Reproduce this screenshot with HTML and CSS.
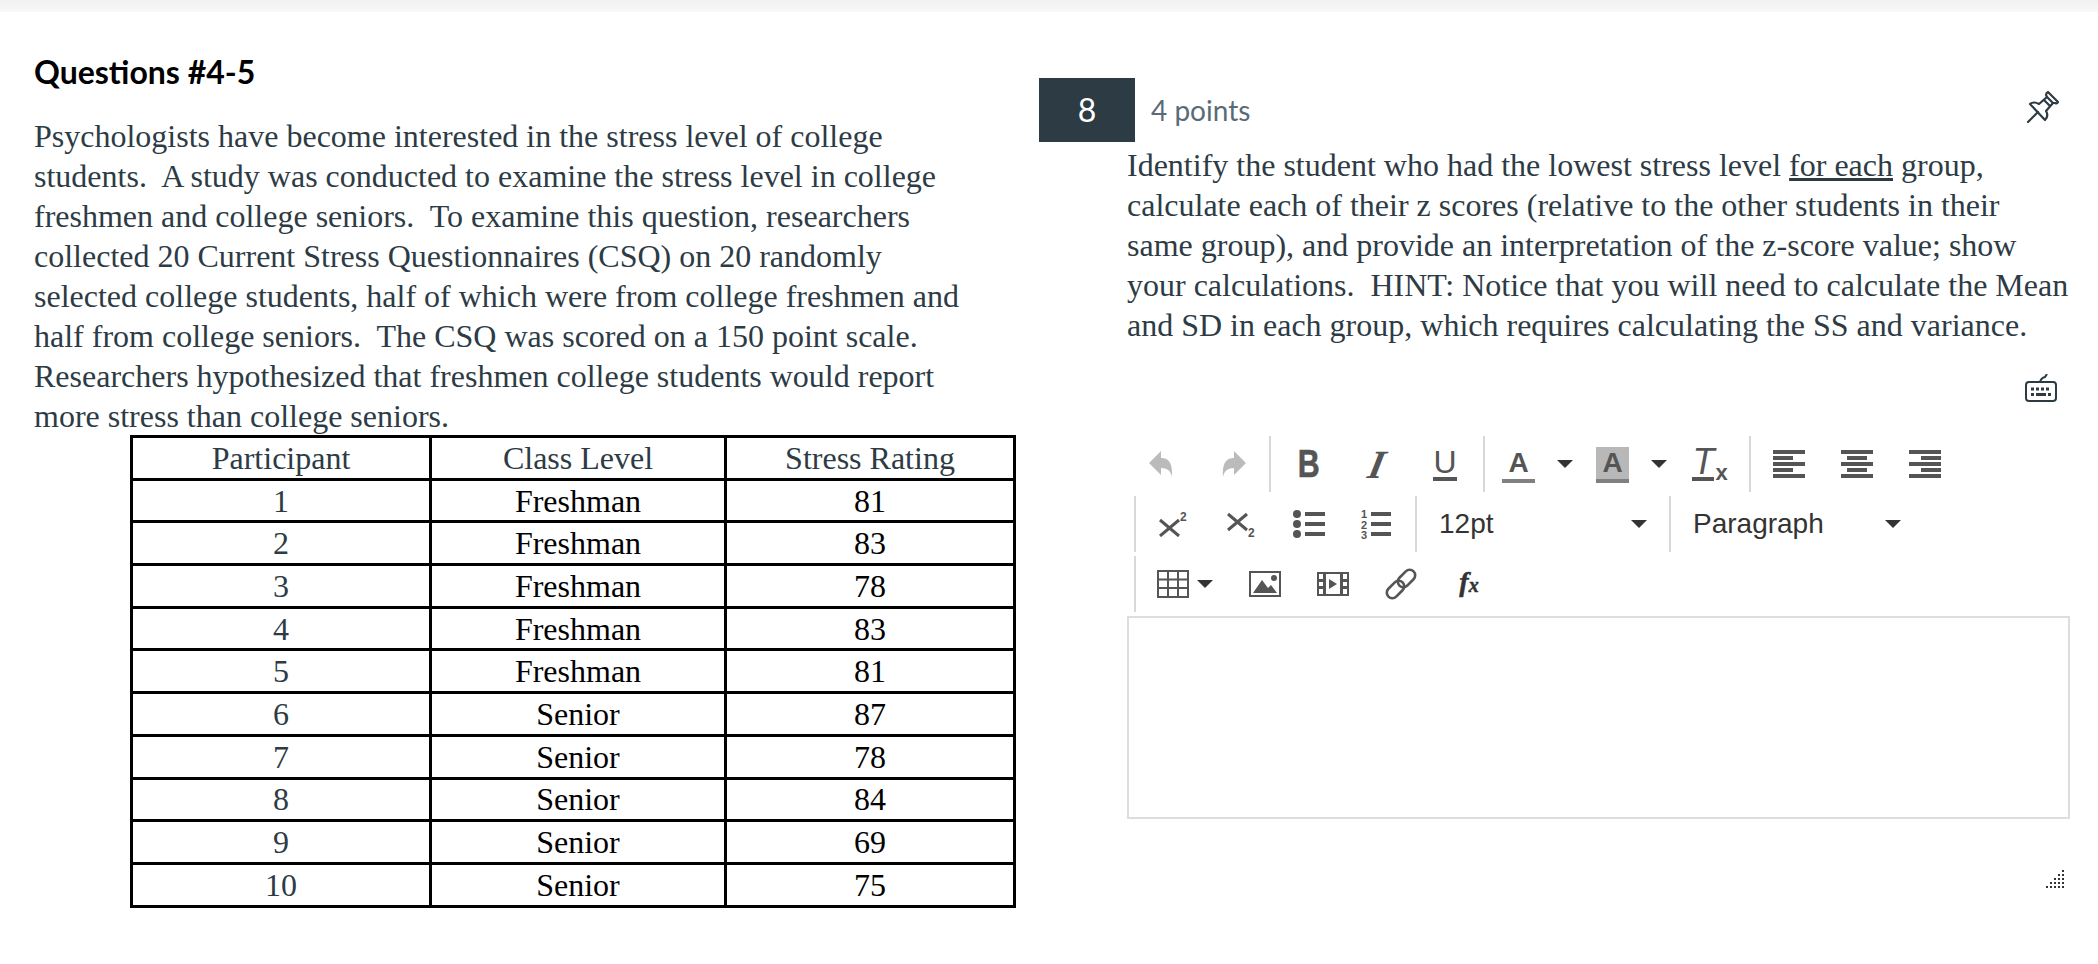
FILE: index.html
```html
<!DOCTYPE html>
<html lang="en">
<head>
  <meta charset="UTF-8" />
  <title>Quiz Question 8</title>
  <link rel="stylesheet" href="styles.css">
</head>
<body>
  <div class="topbar"></div>
  <div class="page">
    <!-- Shared passage -->
    <section class="passage">
      <h2>Questions #4-5</h2>
      <p>Psychologists have become interested in the stress level of college students.&nbsp; A study was conducted to examine the stress level in college freshmen and college seniors.&nbsp; To examine this question, researchers collected 20 Current Stress Questionnaires (CSQ) on 20 randomly selected college students, half of which were from college freshmen and half from college seniors.&nbsp; The CSQ was scored on a 150 point scale.&nbsp; Researchers hypothesized that freshmen college students would report more stress than college seniors.</p>
      <table class="data">
        <tr class="head thin"><td>Participant</td><td>Class Level</td><td>Stress Rating</td></tr>
        <tr><td>1</td><td>Freshman</td><td>81</td></tr>
        <tr><td>2</td><td>Freshman</td><td>83</td></tr>
        <tr><td>3</td><td>Freshman</td><td>78</td></tr>
        <tr><td>4</td><td>Freshman</td><td>83</td></tr>
        <tr><td>5</td><td>Freshman</td><td>81</td></tr>
        <tr><td>6</td><td>Senior</td><td>87</td></tr>
        <tr><td>7</td><td>Senior</td><td>78</td></tr>
        <tr><td>8</td><td>Senior</td><td>84</td></tr>
        <tr class="thin"><td>9</td><td>Senior</td><td>69</td></tr>
        <tr><td>10</td><td>Senior</td><td>75</td></tr>
      </table>
    </section>

    <!-- Question 8 -->
    <section class="question">
      <div class="q-header">
        <div class="q-number">8</div>
        <div class="q-points">4 points</div>
        <svg class="pin" width="32" height="32" viewBox="0 0 32 32" fill="none" stroke="#2d3b45" stroke-width="2.2" stroke-linejoin="round" stroke-linecap="round">
          <path d="M1 31 L11 21" />
          <path d="M3 13 Q7 10 12 13 L20 6 L19 4 Q19 2 21 1 L31 11 Q30 13 28 12 L26 12 L19 20 Q22 25 18 29 Z" />
          <path d="M20 6 L26 12 M17 9 L23 15" />
        </svg>
      </div>
      <p class="q-text">Identify the student who had the lowest stress level <u>for each</u> group, calculate each of their z scores (relative to the other students in their same group), and provide an interpretation of the z-score value; show your calculations.&nbsp; HINT: Notice that you will need to calculate the Mean and SD in each group, which requires calculating the SS and variance.</p>

      <div class="kb-row">
        <svg width="32" height="28" viewBox="0 0 32 28" fill="none" stroke="#2d3b45" stroke-width="2">
          <path d="M15 8 Q16 4 20 3 L22 0" />
          <rect x="1" y="8" width="30" height="19" rx="3" />
          <path stroke-width="3" stroke-dasharray="3 2" d="M6 15 H26" />
          <path stroke-width="3" d="M6 20.500 H9 M11 20.500 H21 M23 20.500 H26" />
        </svg>
      </div>

      <div class="toolbar">
        <div class="tb-row">
          <div class="tool"><svg width="24" height="26" viewBox="0 0 24 26" fill="#bbb"><path d="M0 12 L12 0 V7 C19 7 24 11 23 26 C22 20 18 17 12 17 V24 Z" /></svg></div>
          <div class="tool"><svg class="nudge" width="24" height="26" viewBox="0 0 24 26" fill="#bbb"><path d="M24 12 L12 0 V7 C5 7 0 11 1 26 C2 20 6 17 12 17 V24 Z" /></svg></div>
          <div class="sep sep-a"></div>
          <div class="tool glyph bold"><span>B</span></div>
          <div class="tool glyph ital"><span>I</span></div>
          <div class="tool glyph under"><span>U</span></div>
          <div class="sep sep-b"></div>
          <div class="split"><span class="color-a">A</span><span class="caret"></span></div>
          <div class="split"><span class="color-a hl">A</span><span class="caret"></span></div>
          <div class="tool glyph clear"><span class="tx">T</span><span class="tx-x">x</span></div>
          <div class="sep sep-c"></div>
          <div class="tool">
            <svg width="32" height="28" viewBox="0 0 32 28" fill="#555"><rect width="32" height="4" /><rect y="6" width="20" height="4" /><rect y="12" width="32" height="4" /><rect y="18" width="20" height="4" /><rect y="24" width="32" height="4" /></svg>
          </div>
          <div class="tool">
            <svg width="32" height="28" viewBox="0 0 32 28" fill="#555"><rect width="32" height="4" /><rect x="6" y="6" width="20" height="4" /><rect y="12" width="32" height="4" /><rect x="6" y="18" width="20" height="4" /><rect y="24" width="32" height="4" /></svg>
          </div>
          <div class="tool">
            <svg width="32" height="28" viewBox="0 0 32 28" fill="#555"><rect width="32" height="4" /><rect x="12" y="6" width="20" height="4" /><rect y="12" width="32" height="4" /><rect x="12" y="18" width="20" height="4" /><rect y="24" width="32" height="4" /></svg>
          </div>
        </div>

        <div class="tb-row">
          <div class="sep sep-start wide"></div>
          <div class="tool">
            <svg width="28" height="26" viewBox="0 0 28 26" fill="none" stroke="#555" stroke-width="3"><path d="M1 9 L20 25 M20 9 L1 25" /><text x="21" y="10" fill="#555" stroke="none" font-family="Liberation Sans, sans-serif" font-size="12" font-weight="700">2</text></svg>
          </div>
          <div class="tool">
            <svg width="28" height="26" viewBox="0 0 28 26" fill="none" stroke="#555" stroke-width="3"><path d="M1 3 L20 19 M20 3 L1 19" /><text x="21" y="26" fill="#555" stroke="none" font-family="Liberation Sans, sans-serif" font-size="12" font-weight="700">2</text></svg>
          </div>
          <div class="tool">
            <svg width="32" height="28" viewBox="0 0 32 28" fill="#555"><circle cx="4" cy="4" r="4" /><circle cx="4" cy="14" r="4" /><circle cx="4" cy="24" r="4" /><rect x="12" y="2" width="20" height="4" /><rect x="12" y="12" width="20" height="4" /><rect x="12" y="22" width="20" height="4" /></svg>
          </div>
          <div class="tool">
            <svg width="32" height="30" viewBox="0 0 32 30" fill="#555" font-family="Liberation Sans, sans-serif" font-size="11" font-weight="700"><text x="0" y="9">1</text><text x="0" y="19.500">2</text><text x="0" y="30">3</text><rect x="10" y="3" width="20" height="4" /><rect x="10" y="13" width="20" height="4" /><rect x="10" y="23" width="20" height="4" /></svg>
          </div>
          <div class="sep sep-d"></div>
          <div class="select size"><span>12pt</span><span class="caret"></span></div>
          <div class="sep"></div>
          <div class="select format"><span>Paragraph</span><span class="caret"></span></div>
        </div>

        <div class="tb-row">
          <div class="sep sep-start"></div>
          <div class="split split-table">
            <svg width="32" height="28" viewBox="0 0 32 28" fill="none" stroke="#555" stroke-width="2"><rect x="1" y="1" width="30" height="26" /><path d="M1 9.500 H31 M1 18 H31 M11 1 V27 M21 1 V27" /></svg>
            <span class="caret"></span>
          </div>
          <div class="tool">
            <svg width="32" height="26" viewBox="0 0 32 26" fill="#555"><path d="M0 0 H32 V26 H0 Z M2 2 V24 H30 V2 Z" fill-rule="evenodd" /><path d="M4 22 L13 9 L19 17 L22 14 L28 22 Z" /><circle cx="25" cy="7" r="3" /></svg>
          </div>
          <div class="tool">
            <svg width="32" height="24" viewBox="0 0 32 24" fill="#555"><path fill-rule="evenodd" d="M0 0 H32 V24 H0 Z M2 2 V7 H6 V2 Z M2 10 V14 H6 V10 Z M2 17 V22 H6 V17 Z M26 2 V7 H30 V2 Z M26 10 V14 H30 V10 Z M26 17 V22 H30 V17 Z M9 2 V22 H23 V2 Z" /><path d="M12 7 L20 12 L12 17 Z" /></svg>
          </div>
          <div class="tool">
            <svg width="32" height="32" viewBox="0 0 32 32" fill="none" stroke="#555" stroke-width="2.600"><rect x="-10" y="-5.500" width="20" height="11" rx="5.500" transform="translate(10.500 21.500) rotate(-45)" /><rect x="-10" y="-5.500" width="20" height="11" rx="5.500" transform="translate(21.500 10.500) rotate(-45)" /></svg>
          </div>
          <div class="tool glyph fx">f<span>x</span></div>
        </div>
      </div>

      <div class="editor"></div>

      <div class="grip-row">
        <svg width="18" height="18" viewBox="0 0 18 18" fill="#333">
          <rect x="16" y="0" width="2" height="2" />
          <rect x="12" y="4" width="2" height="2" /><rect x="16" y="4" width="2" height="2" />
          <rect x="8" y="8" width="2" height="2" /><rect x="12" y="8" width="2" height="2" /><rect x="16" y="8" width="2" height="2" />
          <rect x="4" y="12" width="2" height="2" /><rect x="8" y="12" width="2" height="2" /><rect x="12" y="12" width="2" height="2" /><rect x="16" y="12" width="2" height="2" />
          <rect x="0" y="16" width="2" height="2" /><rect x="4" y="16" width="2" height="2" /><rect x="8" y="16" width="2" height="2" /><rect x="12" y="16" width="2" height="2" /><rect x="16" y="16" width="2" height="2" />
        </svg>
      </div>
    </section>
  </div>
</body>
</html>
```

FILE: styles.css
```css
html, body {
  margin: 0;
  background: white;
}
body {
  color: #2d3b45;
  font-family: 'Liberation Serif', serif;
  overflow: hidden;
}
.topbar {
  height: 12px;
  background: linear-gradient(#f1f1f1, #f8f8f8);
}
.page {
  display: grid;
  grid-template-columns: 1039px 1059px;
}

/* left column */
.passage {
  padding-left: 34px;
}
.passage h2 {
  margin: 40px 0 0;
  height: 64px;
  font: bold 32px/40px Lato, sans-serif;
  color: black;
}
.passage p {
  margin: 0 0 -1px;
  width: 945px;
  font-size: 32px;
  line-height: 40px;
}
.data {
  margin-left: 96px;
  width: 886px;
  table-layout: fixed;
  border-collapse: collapse;
  font-size: 32px;
  line-height: 36px;
  color: black;
}
.data td {
  height: 39.7px;
  padding: 0;
  text-align: center;
  border: 3px solid black;
}
.data td:first-child {
  color: #2d3b45;
  width: 296px;
}
.data td:nth-child(2) {
  width: 292px;
}
.data .head td {
  color: #2d3b45;
}
.data .thin td {
  border-bottom-width: 2px;
}

/* right column */
.question {
  padding-top: 66px;
}
.q-header {
  display: flex;
  align-items: center;
  height: 64px;
  margin-bottom: 3px;
  padding-right: 39px;
}
.q-number {
  width: 96px;
  height: 64px;
  background: #2d3b45;
  color: white;
  font: 32px/64px Lato, sans-serif;
  text-align: center;
}
.q-points {
  flex: 1;
  margin-left: 16px;
  font: 28px/36px Lato, sans-serif;
  color: #5a6b78;
}
.pin {
  margin-top: -7px;
}
.q-text {
  margin: 0 0 0 88px;
  width: 944px;
  font-size: 32px;
  line-height: 40px;
}
.kb-row {
  display: flex;
  justify-content: flex-end;
  height: 28px;
  margin-top: 29px;
  padding-right: 41px;
}

/* editor toolbar */
.toolbar {
  margin: 34px 0 0 88px;
  display: flex;
  flex-direction: column;
  gap: 4px;
}
.tb-row {
  display: flex;
  align-items: center;
  height: 56px;
}
.sep {
  width: 2px;
  height: 56px;
  background: #d8d8d8;
}
.sep-a { margin: 0 4px 0 6px; }
.sep-b { margin: 0 1px 0 4px; }
.sep-c { margin: 0 4px 0 5px; }
.sep-d { margin-left: 4px; }
.sep-start { margin: 0 1px 0 7px; }
.sep-start.wide { margin-right: 3px; }
.tool {
  width: 68px;
  height: 56px;
  display: flex;
  align-items: center;
  justify-content: center;
}
.nudge {
  margin-left: 10px;
}
.glyph {
  font-family: 'Liberation Sans', sans-serif;
  color: #555;
}
.bold {
  font-size: 38px;
  font-weight: bold;
}
.bold span {
  transform: scaleX(0.8);
  -webkit-text-stroke: 0.6px #555;
}
.ital {
  font: italic bold 40px 'Liberation Serif', serif;
}
.ital span {
  transform: skewX(-12deg);
}
.under span {
  font-size: 32px;
  line-height: 30px;
  border-bottom: 4px solid #555;
}
.split {
  display: flex;
  align-items: center;
  height: 56px;
  padding-left: 16px;
  margin-right: 7px;
}
.split-table {
  padding-left: 20px;
  margin-right: 18px;
}
.split-table .caret {
  margin-left: 8px;
}
.color-a {
  width: 33px;
  height: 32px;
  margin-top: 2px;
  margin-right: 22px;
  font: bold 28px/32px 'Liberation Sans', sans-serif;
  text-align: center;
  color: #555;
  border-bottom: 4px solid #808080;
}
.hl {
  background: #b8b8b8;
}
.caret {
  width: 0;
  height: 0;
  border-left: 8px solid transparent;
  border-right: 8px solid transparent;
  border-top: 8px solid #333;
}
.clear {
  margin-left: 2px;
}
.tx {
  font: italic 36px/30px 'Liberation Sans', sans-serif;
  border-bottom: 4px solid #555;
  margin-right: 1px;
}
.tx-x {
  font-size: 22px;
  font-weight: bold;
  margin-top: 18px;
}
.select {
  display: flex;
  align-items: center;
  justify-content: space-between;
  height: 56px;
  padding-left: 22px;
  font: 28px 'Liberation Sans', sans-serif;
  color: #333;
}
.size {
  width: 208px;
  padding-right: 22px;
}
.format {
  width: 208px;
}
.fx {
  height: 52px;
  padding-bottom: 4px;
  font: italic bold 28px 'Liberation Serif', serif;
  color: #333;
  -webkit-text-stroke: 0.5px #333;
}
.fx span {
  font-size: 20px;
  margin-top: 6px;
}

.editor {
  margin: 4px 0 0 88px;
  width: 939px;
  height: 199px;
  border: 2px solid #ddd;
}
.grip-row {
  display: flex;
  justify-content: flex-end;
  margin-top: 51px;
  padding-right: 34px;
}
```
